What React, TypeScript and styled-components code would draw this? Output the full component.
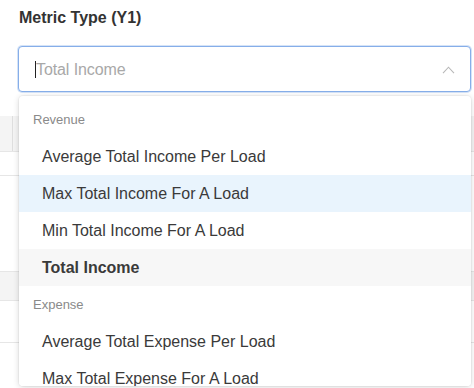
import React from "react";
import styled, { createGlobalStyle } from "styled-components";

const GlobalStyle = createGlobalStyle`
  html, body {
    margin: 0;
    padding: 0;
    background: #fff;
    font-family: "Liberation Sans", Arial, Helvetica, sans-serif;
  }
`;

interface Option {
  label: string;
  state?: "hover" | "selected";
}

interface Group {
  title: string;
  options: Option[];
}

const groups: Group[] = [
  {
    title: "Revenue",
    options: [
      { label: "Average Total Income Per Load" },
      { label: "Max Total Income For A Load", state: "hover" },
      { label: "Min Total Income For A Load" },
      { label: "Total Income", state: "selected" },
    ],
  },
  {
    title: "Expense",
    options: [
      { label: "Average Total Expense Per Load" },
      { label: "Max Total Expense For A Load" },
    ],
  },
];

const Page = styled.div`
  position: relative;
  width: 474px;
  height: 388px;
  overflow: hidden;
`;

const Field = styled.div`
  display: flex;
  flex-direction: column;
  padding: 9px 3px 0 18px;
`;

const Label = styled.label`
  font-size: 16px;
  line-height: 18px;
  font-weight: 700;
  color: #333;
  margin-left: 1px;
  margin-bottom: 19px;
`;

const SelectWrap = styled.div`
  position: relative;
`;

const Control = styled.div`
  height: 46px;
  box-sizing: border-box;
  border: 1px solid #86aee9;
  border-radius: 4px;
  box-shadow: 0 0 0 1px rgba(134, 174, 233, 0.35);
  display: flex;
  align-items: center;
  padding: 1px 14px 0 16px;
  background: #fff;
`;

const Caret = styled.span`
  width: 1px;
  height: 17px;
  background: #222;
`;

const Placeholder = styled.span`
  flex: 1;
  font-size: 16px;
  color: #a8a8a8;
  letter-spacing: -0.1px;
`;

const Chevron = styled.svg`
  width: 13px;
  height: 8px;
  margin-right: 1px;
`;

const Menu = styled.div`
  position: absolute;
  top: calc(100% + 4px);
  left: 1px;
  right: 0;
  height: 290px;
  overflow: hidden;
  background: #fff;
  border-radius: 4px;
  box-shadow: 0 1px 6px rgba(0, 0, 0, 0.16), 0 0 0 1px rgba(0, 0, 0, 0.03);
  padding-top: 5px;
  box-sizing: border-box;
  z-index: 2;
`;

const GroupTitle = styled.div`
  height: 37px;
  display: flex;
  align-items: center;
  padding-left: 14px;
  font-size: 13px;
  color: #8a8a8a;
`;

const Item = styled.div<{ $state?: "hover" | "selected" }>`
  height: 37px;
  display: flex;
  align-items: center;
  padding-left: 23px;
  font-size: 16px;
  color: #3a3a3a;
  font-weight: ${({ $state }) => ($state === "selected" ? 700 : 400)};
  background: ${({ $state }) =>
    $state === "hover" ? "#e9f4fd" : $state === "selected" ? "#f7f7f7" : "#fff"};
`;

const Table = styled.div`
  position: absolute;
  top: 116px;
  left: 0;
  right: 0;
  z-index: 1;
`;

const Row = styled.div<{ $h: number; $gray?: boolean }>`
  height: ${({ $h }) => $h}px;
  box-sizing: border-box;
  border-bottom: 1px solid #e6e6e6;
  background: ${({ $gray }) => ($gray ? "#f4f4f4" : "#fff")};
  display: flex;
`;

const Cell = styled.div`
  width: 12px;
  border-right: 1px solid #dedede;
`;

const Spacer = styled.div<{ $h: number }>`
  height: ${({ $h }) => $h}px;
`;

export default function App() {
  return (
    <Page>
      <GlobalStyle />
      <Table>
        <Row $h={36} $gray>
          <Cell />
        </Row>
        <Row $h={24} />
        <Spacer $h={95} />
        <Row $h={30} $gray style={{ borderTop: "1px solid #e6e6e6" }} />
        <Row $h={42} />
      </Table>
      <Field>
        <Label>Metric Type (Y1)</Label>
        <SelectWrap>
          <Control>
            <Caret />
            <Placeholder>Total Income</Placeholder>
            <Chevron viewBox="0 0 13 8" fill="none">
              <path d="M1 7.2 L6.5 1.2 L12 7.2" stroke="#b8b8b8" strokeWidth="1.1" />
            </Chevron>
          </Control>
          <Menu>
            {groups.map((g) => (
              <div key={g.title}>
                <GroupTitle>{g.title}</GroupTitle>
                {g.options.map((o) => (
                  <Item key={o.label} $state={o.state}>
                    {o.label}
                  </Item>
                ))}
              </div>
            ))}
          </Menu>
        </SelectWrap>
      </Field>
    </Page>
  );
}
